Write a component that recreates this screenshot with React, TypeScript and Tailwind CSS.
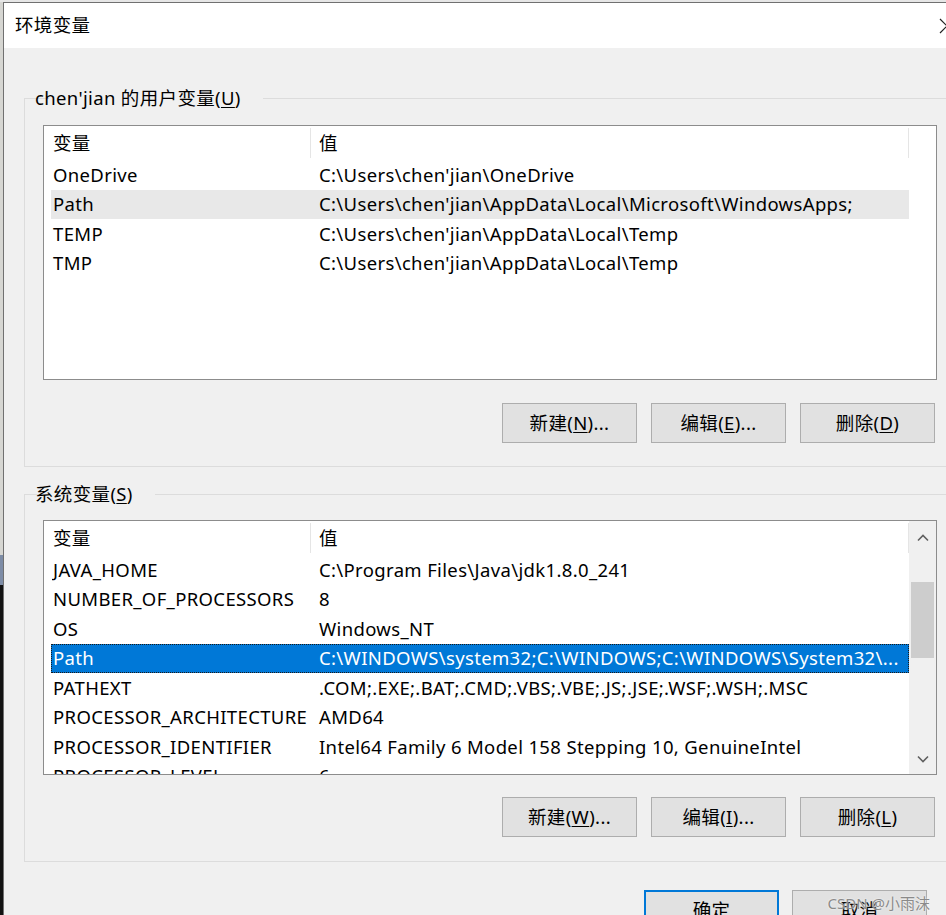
import type { ReactNode } from "react";

interface IRow {
  name: string;
  value: string;
}

const userRows: IRow[] = [
  { name: "OneDrive", value: "C:\\Users\\chen'jian\\OneDrive" },
  { name: "Path", value: "C:\\Users\\chen'jian\\AppData\\Local\\Microsoft\\WindowsApps;" },
  { name: "TEMP", value: "C:\\Users\\chen'jian\\AppData\\Local\\Temp" },
  { name: "TMP", value: "C:\\Users\\chen'jian\\AppData\\Local\\Temp" },
];

const systemRows: IRow[] = [
  { name: "JAVA_HOME", value: "C:\\Program Files\\Java\\jdk1.8.0_241" },
  { name: "NUMBER_OF_PROCESSORS", value: "8" },
  { name: "OS", value: "Windows_NT" },
  { name: "Path", value: "C:\\WINDOWS\\system32;C:\\WINDOWS;C:\\WINDOWS\\System32\\..." },
  { name: "PATHEXT", value: ".COM;.EXE;.BAT;.CMD;.VBS;.VBE;.JS;.JSE;.WSF;.WSH;.MSC" },
  { name: "PROCESSOR_ARCHITECTURE", value: "AMD64" },
  { name: "PROCESSOR_IDENTIFIER", value: "Intel64 Family 6 Model 158 Stepping 10, GenuineIntel" },
  { name: "PROCESSOR_LEVEL", value: "6" },
];

// Botón clásico de Windows
function WinButton({ children, primary = false }: { children: ReactNode; primary?: boolean }) {
  return (
    <button
      className={`w-[135px] h-[40px] bg-[#e1e1e1] flex items-center justify-center text-black ${
        primary ? "border-2 border-[#0078d7]" : "border border-[#adadad]"
      }`}
    >
      {children}
    </button>
  );
}

function Chevron({ up }: { up: boolean }) {
  return (
    <svg width="12" height="8" viewBox="0 0 12 8" fill="none">
      <path
        d={up ? "M1 6.5L6 1.5L11 6.5" : "M1 1.5L6 6.5L11 1.5"}
        stroke="#606060"
        strokeWidth="1.6"
      />
    </svg>
  );
}

function ListBox({ rows, hover, selected, scroll = false }: { rows: IRow[]; hover?: string; selected?: string; scroll?: boolean }) {
  return (
    <div className="w-[894px] h-[255px] border border-[#8c8c8c] bg-white flex">
      <div className="w-[865px] h-full pl-[7px] overflow-hidden">
        {/* Cabecera */}
        <div className="h-[34px] flex items-center">
          <div className="w-[259px] pl-[2px]">变量</div>
          <div className="w-px h-[30px] bg-[#e5e5e5]"></div>
          <div className="w-[597px] pl-[8px]">值</div>
          <div className="w-px h-[30px] bg-[#e5e5e5]"></div>
        </div>
        {rows.map((r) => {
          const isSel = r.name === selected;
          const isHover = r.name === hover;
          return (
            <div
              key={r.name}
              className={`w-[858px] h-[29.5px] flex items-center whitespace-nowrap ${
                isSel
                  ? "bg-[#0078d7] text-white border border-dotted border-[#1a1a1a]"
                  : isHover
                  ? "bg-[#e8e8e8] border border-transparent"
                  : "border border-transparent"
              }`}
            >
              <div className="w-[259px] pl-[1px] overflow-hidden">{r.name}</div>
              <div className="flex-1 pl-[8px] overflow-hidden">{r.value}</div>
            </div>
          );
        })}
      </div>
      {scroll && (
        <div className="w-[27px] h-full bg-[#f0f0f0] flex flex-col items-center">
          <div className="h-[33px] w-full flex items-center justify-center">
            <Chevron up />
          </div>
          <div className="h-[28px]"></div>
          <div className="w-[23px] h-[76px] bg-[#cdcdcd]"></div>
          <div className="flex-1"></div>
          <div className="h-[30px] w-full flex items-center justify-center">
            <Chevron up={false} />
          </div>
        </div>
      )}
    </div>
  );
}

export default function App() {
  return (
    <div className="w-[946px] h-[915px] overflow-hidden flex flex-col bg-[#e4e4e4] font-['Noto_Sans','Noto_Sans_CJK_SC',sans-serif] text-[18.5px] tracking-[0.35px] text-black relative">
      <div className="h-[2px] bg-[#e6e6e6] shrink-0"></div>
      <div className="flex flex-1">
        {/* Escritorio detrás */}
        <div className="w-[3px] flex flex-col shrink-0">
          <div className="h-[553px] bg-[#d6d6d2]"></div>
          <div className="h-[30px] bg-[#7d8ca6]"></div>
          <div className="flex-1 bg-[#121212]"></div>
        </div>

        {/* Ventana */}
        <div className="w-[960px] shrink-0 border-l border-t border-[#707070] bg-[#f0f0f0] flex flex-col">
          <div className="h-[45px] bg-white flex items-center pl-[11px] pr-[8px]">
            <span className="leading-none">环境变量</span>
            <svg className="ml-auto" width="16" height="16" viewBox="0 0 16 16">
              <path d="M1 1L15 15M15 1L1 15" stroke="#222" strokeWidth="1.2" />
            </svg>
          </div>

          {/* Variables de usuario */}
          <fieldset className="mt-[38px] ml-[20px] w-[930px] border border-[#dcdcdc] pl-[18px] pb-[23px]">
            <legend className="ml-[6px] px-[4px] h-[24px] leading-[24px] -translate-x-[18px]">
              chen'jian 的用户变量(<u className="underline-offset-2">U</u>)
            </legend>
            <div className="mt-[15px]">
              <ListBox rows={userRows} hover="Path" />
            </div>
            <div className="w-[894px] mt-[23px] flex justify-end gap-[14px] pr-[2px]">
              <WinButton>新建(<u className="underline-offset-2">N</u>)...</WinButton>
              <WinButton>编辑(<u className="underline-offset-2">E</u>)...</WinButton>
              <WinButton>删除(<u className="underline-offset-2">D</u>)</WinButton>
            </div>
          </fieldset>

          {/* Variables del sistema */}
          <fieldset className="mt-[15px] ml-[20px] w-[930px] border border-[#dcdcdc] pl-[18px] pb-[24px]">
            <legend className="ml-[6px] px-[4px] h-[24px] leading-[24px] -translate-x-[18px]">
              系统变量(<u className="underline-offset-2">S</u>)
            </legend>
            <div className="mt-[14px]">
              <ListBox rows={systemRows} selected="Path" scroll />
            </div>
            <div className="w-[894px] mt-[22px] flex justify-end gap-[14px] pr-[2px]">
              <WinButton>新建(<u className="underline-offset-2">W</u>)...</WinButton>
              <WinButton>编辑(<u className="underline-offset-2">I</u>)...</WinButton>
              <WinButton>删除(<u className="underline-offset-2">L</u>)</WinButton>
            </div>
          </fieldset>

          <div className="ml-[39px] w-[894px] mt-[28px] flex justify-end gap-[13px] pr-[10px]">
            <WinButton primary>确定</WinButton>
            <WinButton>取消</WinButton>
          </div>
        </div>
      </div>

      {/* Marca de agua */}
      <div className="absolute right-[16px] bottom-[1px] text-[15px] tracking-normal text-[#8a8a8a] [text-shadow:0_0_2px_#fff]">
        CSDN @小雨沫
      </div>
    </div>
  );
}
